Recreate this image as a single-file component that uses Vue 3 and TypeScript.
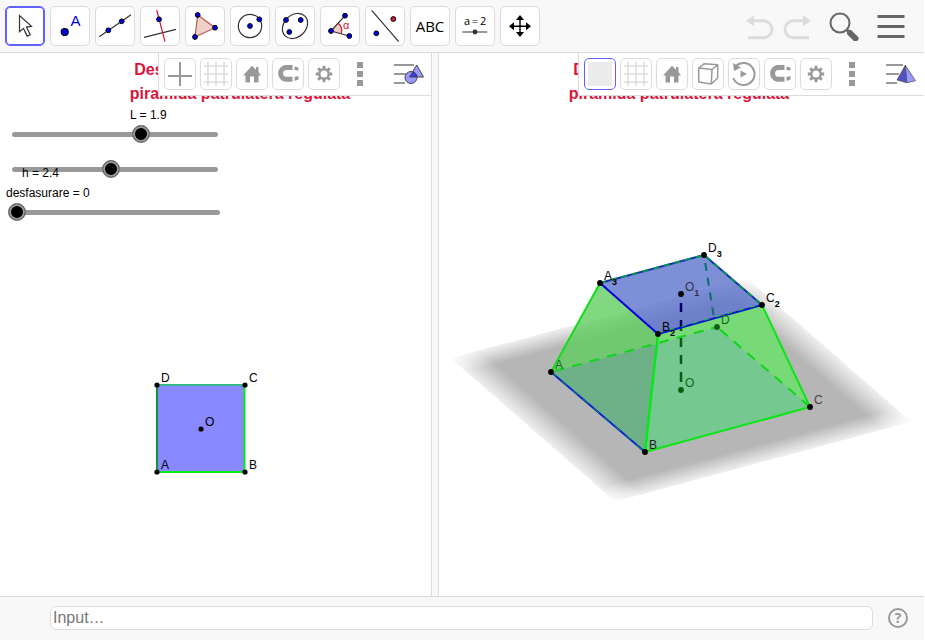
<script setup lang="ts">
import { ref } from 'vue'

interface Slider {
  id: string
  name: string
  value: number
  min: number
  max: number
  step: number
}

interface PointMark {
  x: number
  y: number
  label: string
  sub?: string
  color?: string
  text?: string
}

const command = ref('')
const activeTool = ref('move')

const tools: { id: string; title: string }[] = [
  { id: 'move', title: 'Move' },
  { id: 'point', title: 'Point' },
  { id: 'line', title: 'Line' },
  { id: 'perpendicular', title: 'Perpendicular Line' },
  { id: 'polygon', title: 'Polygon' },
  { id: 'circle', title: 'Circle with Center' },
  { id: 'ellipse', title: 'Ellipse' },
  { id: 'angle', title: 'Angle' },
  { id: 'reflect', title: 'Reflect about Line' },
  { id: 'text', title: 'Text' },
  { id: 'slider', title: 'Slider' },
  { id: 'pan', title: 'Move Graphics View' },
]

const views: { id: string; name: string; controls: string[] }[] = [
  { id: 'plane', name: 'Graphics', controls: ['axes', 'grid', 'home', 'magnet', 'gear'] },
  { id: 'space', name: '3D Graphics', controls: ['slab', 'grid', 'home', 'cube', 'rotate', 'magnet', 'gear'] },
]

const sliders = ref<Slider[]>([
  { id: 'side', name: 'L', value: 1.9, min: 0, max: 3, step: 0.1 },
  { id: 'height', name: 'h', value: 2.4, min: 0, max: 5, step: 0.1 },
  { id: 'unfold', name: 'desfasurare', value: 0, min: 0, max: 1, step: 0.01 },
])

const gearTeeth = [0, 45, 90, 135, 180, 225, 270, 315]

const planePoints: PointMark[] = [
  { x: 157, y: 419, label: 'A' },
  { x: 245, y: 419, label: 'B' },
  { x: 245, y: 332, label: 'C' },
  { x: 157, y: 332, label: 'D' },
  { x: 201, y: 376, label: 'O' },
]

const spacePoints: PointMark[] = [
  { x: 112, y: 319, label: 'A', text: '#1c6b2c' },
  { x: 206, y: 399, label: 'B', text: '#222222' },
  { x: 371, y: 354, label: 'C', text: '#444444' },
  { x: 278, y: 274, label: 'D', color: '#07600f', text: '#14661c' },
  { x: 242, y: 337, label: 'O', color: '#07600f', text: '#14661c' },
  { x: 242, y: 241, label: 'O', sub: '1', text: '#33333f' },
  { x: 161, y: 230, label: 'A', sub: '3' },
  { x: 219, y: 281, label: 'B', sub: '2' },
  { x: 323, y: 252, label: 'C', sub: '2' },
  { x: 265, y: 202, label: 'D', sub: '3' },
]
</script>

<template>
  <div class="app">
    <header class="toolbar">
      <div class="tools">
        <button
          v-for="tool in tools"
          :key="tool.id"
          type="button"
          class="tool"
          :class="{ active: tool.id === activeTool }"
          :aria-label="tool.title"
          @click="activeTool = tool.id"
        >
          <svg class="tool-icon" viewBox="1 1 38 38" fill="none" stroke="#333" stroke-width="1.2">
            <path v-if="tool.id === 'move'" d="M14.5 9.5v16.2l4-3.3 3.7 7.7 3-1.4-3.7-7.6 5-.7z" fill="#fff" />
            <template v-else-if="tool.id === 'point'">
              <circle cx="14.7" cy="26" r="3.5" fill="#0000e6" stroke="#000" />
              <text x="20.5" y="20" class="glyph blue">A</text>
            </template>
            <template v-else-if="tool.id === 'line'">
              <path d="M4.3 30.7 36 8.7" />
              <circle cx="13.3" cy="24.3" r="2.4" class="dot" />
              <circle cx="26.7" cy="15.3" r="2.4" class="dot" />
            </template>
            <template v-else-if="tool.id === 'perpendicular'">
              <path d="M4 31.3 36 23.3" />
              <path d="M16.7 4 25 35.7" stroke="#dc143c" />
              <circle cx="19" cy="13.3" r="2.4" class="dot" />
            </template>
            <template v-else-if="tool.id === 'polygon'">
              <path d="M12.7 9 30 21.7 10 31z" fill="#f0cfc9" stroke="#b85c50" />
              <circle cx="12.7" cy="9" r="2.4" class="dot" />
              <circle cx="30" cy="21.7" r="2.4" class="dot" />
              <circle cx="10" cy="31" r="2.4" class="dot" />
            </template>
            <template v-else-if="tool.id === 'circle'">
              <circle cx="20" cy="20" r="11.7" />
              <circle cx="20" cy="20" r="2.4" class="dot" />
              <circle cx="29.3" cy="13.3" r="2.4" class="dot" />
            </template>
            <template v-else-if="tool.id === 'ellipse'">
              <ellipse cx="20" cy="20" rx="14" ry="11" transform="rotate(-45 20 20)" />
              <circle cx="11" cy="14" r="2.4" class="dot" />
              <circle cx="25.7" cy="14" r="2.4" class="dot" />
              <circle cx="14.3" cy="26" r="2.4" class="dot" />
            </template>
            <template v-else-if="tool.id === 'angle'">
              <path d="M11 25 18.3 17.3A10.6 10.6 0 0 1 21.3 27.7z" fill="#f0cfc9" stroke="none" />
              <path d="M18.3 17.3A10.6 10.6 0 0 1 21.3 27.7" stroke="#dc143c" />
              <path d="M25 9.7 11 25 29.3 30" />
              <circle cx="25" cy="9.7" r="2.4" class="dot" />
              <circle cx="11" cy="25" r="2.4" class="dot" />
              <circle cx="29.3" cy="30" r="2.4" class="dot" />
              <text x="23" y="23" class="glyph alpha red">α</text>
            </template>
            <template v-else-if="tool.id === 'reflect'">
              <path d="M6.7 4.3 33.7 35.7" />
              <circle cx="28.3" cy="13" r="2.4" class="dot crimson" />
              <circle cx="11.3" cy="27.3" r="2.4" class="dot" />
            </template>
            <text v-else-if="tool.id === 'text'" x="20" y="25.5" text-anchor="middle" class="glyph word">ABC</text>
            <template v-else-if="tool.id === 'slider'">
              <text x="9" y="18.5" class="glyph small">a</text>
              <text x="20" y="18.5" text-anchor="middle" class="glyph small">=</text>
              <text x="25" y="18.5" class="glyph small">2</text>
              <path d="M7.3 26H32.3" stroke="#555" />
              <circle cx="20" cy="26" r="2.4" fill="#333" stroke="none" />
            </template>
            <template v-else>
              <path d="M11 20.3h18M20 11v18" stroke="#000" stroke-width="1.4" />
              <path
                d="M20 9l4 5h-8zM20 31l4-5h-8zM9 20.3l5-4v8zM31 20.3l-5-4v8z"
                fill="#000"
                stroke="none"
              />
            </template>
          </svg>
        </button>
      </div>
      <div class="actions">
        <button type="button" class="plain" aria-label="Undo" disabled>
          <svg width="30" height="30" viewBox="1 0 30 30" fill="none" stroke="#dcdcdc" stroke-width="3">
            <path d="M9 9.700h9.500a8.500 8.500 0 0 1 0 17H3" />
            <path d="M1 9.700 9 4.300v10.900z" fill="#dcdcdc" stroke="none" />
          </svg>
        </button>
        <button type="button" class="plain" aria-label="Redo" disabled>
          <svg width="30" height="30" viewBox="1 0 30 30" fill="none" stroke="#dcdcdc" stroke-width="3">
            <path d="M21 9.700h-9.500a8.500 8.500 0 0 0 0 17H27" />
            <path d="M29 9.700 21 4.300v10.900z" fill="#dcdcdc" stroke="none" />
          </svg>
        </button>
        <button type="button" class="plain search" aria-label="Search">
          <svg width="30" height="30" viewBox="0 0 30 30" fill="none" stroke="#666">
            <circle cx="11" cy="12" r="9.500" stroke-width="2" />
            <path d="M17.500 18.500l4 4" stroke-width="3" />
            <path d="M21 22l5.500 5.500" stroke-width="6" stroke-linecap="round" />
          </svg>
        </button>
        <button type="button" class="plain menu" aria-label="Menu">
          <svg width="30" height="30" viewBox="0 0 30 30" stroke="#666" stroke-width="3">
            <path d="M1.500 5.500h27M1.500 15.500h27M1.500 25.500h27" />
          </svg>
        </button>
      </div>
    </header>

    <main class="views">
      <section v-for="view in views" :key="view.id" class="view" :class="view.id" :aria-label="view.name">
        <h2 class="caption">Desfasurarea trunchiului de<br />piramida patrulatera regulata</h2>

        <svg v-if="view.id === 'plane'" class="canvas">
          <rect x="157" y="332" width="87.500" height="87" fill="#8888ff" />
          <g fill="none" stroke-width="2">
            <path d="M157 332H244.500" stroke="#35b98a" />
            <path d="M157 332V419" stroke="#15903f" />
            <path d="M244.500 332V419H157" stroke="#05ec14" />
          </g>
          <g v-for="p in planePoints" :key="p.label">
            <circle :cx="p.x" :cy="p.y" r="2.6" />
            <text :x="p.x + 4" :y="p.y - 3" class="mark">{{ p.label }}</text>
          </g>
        </svg>

        <svg v-else class="canvas">
          <defs>
            <linearGradient id="fadeU">
              <stop offset="0" stop-color="#b6b6b6" stop-opacity="0.2" />
              <stop offset="0.1" stop-color="#b6b6b6" />
              <stop offset="0.9" stop-color="#b6b6b6" />
              <stop offset="1" stop-color="#b6b6b6" stop-opacity="0.2" />
            </linearGradient>
            <linearGradient id="fadeV" x2="0" y2="1">
              <stop offset="0" stop-color="#fff" stop-opacity="0.2" />
              <stop offset="0.1" stop-color="#fff" />
              <stop offset="0.9" stop-color="#fff" />
              <stop offset="1" stop-color="#fff" stop-opacity="0.2" />
            </linearGradient>
            <mask id="fadeMask" maskUnits="userSpaceOnUse" x="0" y="0" width="100" height="100">
              <rect width="100" height="100" fill="url(#fadeV)" />
            </mask>
          </defs>
          <g transform="matrix(2.97 -0.8 1.65 1.44 11 305)">
            <rect width="100" height="100" fill="url(#fadeU)" mask="url(#fadeMask)" />
          </g>
          <path d="M112 319 161 230 219 281 218 291z" fill="#5fcd5c" fill-opacity="0.78" />
          <path d="M219 281 323 252 371 354 278 274 218 291z" fill="#74db73" fill-opacity="0.94" />
          <path d="M112 319 206 399 218 291z" fill="#6eb088" />
          <path d="M206 399 371 354 278 274 218 291z" fill="#74c890" />
          <path d="M161 230 219 281 323 252 265 202z" fill="#5c73cd" fill-opacity="0.8" />
          <g fill="none" stroke-width="2">
            <path d="M112 319 278 274M278 274 371 354" stroke="#10d51c" stroke-dasharray="10 8" stroke-dashoffset="-4" />
            <path d="M265 202 275 265" stroke="#08706c" stroke-dasharray="8 7" stroke-dashoffset="-8" />
            <path d="M242 250v9M242 267v7" stroke="#000068" stroke-width="2.500" />
            <path d="M242 274v4M242 285v9M242 302v9M242 319v10" stroke="#075f16" stroke-width="2.500" />
            <path d="M112 319 161 230" stroke="#12dc1b" />
            <path d="M206 399 371 354M371 354 323 252" stroke="#0de517" />
            <path d="M206 399 219 281" stroke="#08e818" stroke-width="2.500" />
            <path d="M112 319 206 399" stroke="#0826cd" />
            <path d="M112 319 206 399" stroke="#078b5a" stroke-width="1" stroke-dasharray="7 7" />
            <path d="M161 230 219 281" stroke="#0000e0" />
            <path d="M219 281 323 252" stroke="#0818c8" />
            <path d="M219 280 323 251" stroke="#08cf35" stroke-width="1" stroke-dasharray="5 7" />
            <path d="M161 230 265 202 323 252" stroke="#1231ad" />
            <path d="M161 230 265 202 323 252" stroke="#079653" stroke-dasharray="6 5" />
          </g>
          <g v-for="(p, i) in spacePoints" :key="i">
            <circle :cx="p.x" :cy="p.y" r="2.900" :fill="p.color ?? '#000'" />
            <text :x="p.x + 4" :y="p.y - 3" class="mark" :fill="p.text ?? '#000'">{{ p.label }}<tspan v-if="p.sub" dy="5" class="sub">{{ p.sub }}</tspan></text>
          </g>
        </svg>

        <template v-if="view.id === 'plane'">
          <div v-for="s in sliders" :key="s.id" class="slider" :class="s.id">
            <label :for="s.id">{{ s.name }} = {{ s.value }}</label>
            <input :id="s.id" v-model.number="s.value" type="range" :min="s.min" :max="s.max" :step="s.step" />
          </div>
        </template>

        <div class="stylebar">
          <button
            v-for="c in view.controls"
            :key="c"
            type="button"
            class="control"
            :class="{ active: c === 'slab' }"
            :aria-label="c"
          >
            <svg class="control-icon" viewBox="1 1 30 30" fill="none" stroke="#999" stroke-width="2">
              <path v-if="c === 'axes'" d="M16 4v24M4 18h24" />
              <path v-else-if="c === 'grid'" d="M8 4v24M16 4v24M24 4v24M4 8h24M4 16h24M4 24h24" stroke="#dcdcdc" stroke-width="1.500" />
              <rect v-else-if="c === 'slab'" x="4" y="4" width="24" height="24" fill="#ececec" stroke="none" />
              <path
                v-else-if="c === 'home'"
                d="M16 7.800 20 11.700V9h2.500v5L25 17.500h-2.500v7H18v-6h-4v6H9.500v-7H7z"
                fill="#999"
                stroke="none"
              />
              <template v-else-if="c === 'magnet'">
                <path d="M20.500 9.500H13.500a6 6 0 0 0 0 11.800H20.500" stroke-width="5" />
                <path d="M22.500 8.500l4 1v3l-4-.5zM22.500 19l4-1v3.500l-4 1.500z" fill="#999" stroke="none" />
              </template>
              <template v-else-if="c === 'gear'">
                <circle cx="16" cy="16" r="4.700" stroke-width="2.400" />
                <path
                  v-for="a in gearTeeth"
                  :key="a"
                  d="M16 7.800v3.200"
                  stroke-width="3"
                  :transform="`rotate(${a} 16 16)`"
                />
              </template>
              <path
                v-else-if="c === 'cube'"
                d="M6.700 10 20 11.500 19.300 26 6.700 24zM6.700 10 12.300 5.700 25.700 6.700 20 11.500M25.700 6.700V20L19.300 26"
                stroke-width="1.500"
                stroke-linejoin="round"
              />
              <template v-else>
                <path d="M8 8A11 11 0 1 1 5.300 20" />
                <path d="M5 5l1 8 7-3.500z" fill="#999" stroke="none" />
                <path d="M12.500 12.500v7l6.500-3.500z" fill="#999" stroke="none" />
              </template>
            </svg>
          </button>
          <button type="button" class="plain dots" aria-label="More"><i></i><i></i><i></i></button>
          <button type="button" class="plain algebra" aria-label="Style">
            <svg width="32" height="32" viewBox="0 0 32 32">
              <path v-if="view.id === 'plane'" d="M2 7h20M2 16h12M2 25h11" stroke="#999" stroke-width="2" />
              <path v-else d="M2 7h17M2 16h13M2 25h11" stroke="#999" stroke-width="2" />
              <g v-if="view.id === 'plane'" stroke="#444">
                <path d="M24.700 7 31.500 19H17.500z" fill="#9999ff" />
                <circle cx="19" cy="19.500" r="6" fill="#9999ff" />
                <path d="M21 13.800A6 6 0 0 1 25 19H17.500z" fill="#3b3bea" />
              </g>
              <g v-else stroke="#555" stroke-linejoin="round" stroke-width="0.800">
                <path d="M21.300 7.300 31.500 22.700 22.700 24.700z" fill="#9999ff" />
                <path d="M21.300 7.300 22.700 24.700 13 22z" fill="#5151c8" />
              </g>
            </svg>
          </button>
        </div>
      </section>
    </main>

    <footer class="inputbar">
      <input v-model="command" type="text" class="command" placeholder="Input…" aria-label="Input" />
      <button type="button" class="plain help" aria-label="Help">
        <svg width="20" height="20" viewBox="0 0 20 20">
          <circle cx="10" cy="10" r="9" fill="none" stroke="#999" stroke-width="2" />
          <text x="10" y="15" text-anchor="middle" class="question">?</text>
        </svg>
      </button>
    </footer>
  </div>
</template>

<style>
body {
  margin: 0;
  background: #fff;
}
</style>

<style scoped>
.app {
  box-sizing: border-box;
  display: flex;
  flex-direction: column;
  min-height: 100vh;
  padding: 0 1px 1px 0;
  font-family: "Liberation Sans", Arial, sans-serif;
}

button {
  padding: 0;
  font: inherit;
  cursor: pointer;
}

svg {
  display: block;
}

.toolbar {
  display: flex;
  justify-content: space-between;
  align-items: center;
  padding: 6px 18px 6px 5px;
  background: #f8f8f8;
  border-bottom: 1px solid #dcdcdc;
}

.tools {
  display: flex;
  gap: 5px;
}

.tool {
  box-sizing: border-box;
  display: grid;
  place-items: center;
  width: 40px;
  height: 40px;
  background: #fff;
  border: 1px solid #dcdcdc;
  border-radius: 5px;
}

.tool.active {
  border-color: #6161ff;
  box-shadow: inset 0 0 0 1px #6161ff;
}

.tool-icon {
  width: 38px;
  height: 38px;
}

.glyph {
  font: 15px "Liberation Sans", Arial, sans-serif;
  fill: #000;
  stroke: none;
}

.glyph.word {
  font-family: "Open Sans", sans-serif;
}

.glyph.small {
  font-family: "Open Sans", sans-serif;
  font-size: 11px;
}

.glyph.alpha {
  font-size: 11px;
}

.glyph.blue {
  fill: #0000e6;
}

.glyph.red {
  fill: #dc143c;
}

.dot {
  fill: #0000e6;
  stroke: #000;
  stroke-width: 1px;
}

.dot.crimson {
  fill: #dc143c;
}

.plain {
  background: none;
  border: 0;
}

.actions {
  display: flex;
  align-items: center;
  gap: 7px;
}

.search {
  margin-left: 9px;
}

.menu {
  margin-left: 10px;
}

.views {
  display: flex;
  flex: 1;
  background: #f8f8f8;
}

.view {
  position: relative;
  flex: 431 1 0;
  min-width: 0;
  overflow: hidden;
  background: #fff;
}

.view.plane {
  border-right: 1px solid #dcdcdc;
}

.view.space {
  flex-grow: 485;
  margin-left: 6px;
  border-left: 1px solid #dcdcdc;
}

.canvas {
  position: absolute;
  inset: 0;
  width: 100%;
  height: 100%;
}

.caption {
  position: absolute;
  top: 5px;
  left: 120px;
  width: 240px;
  margin: 0;
  font-size: 16px;
  line-height: 24px;
  text-align: center;
  color: #dc143c;
}

.mark {
  font-size: 12px;
}

.sub {
  font-size: 9px;
  font-weight: bold;
}

.slider {
  position: absolute;
  left: 8px;
  width: 214px;
}

.slider.side {
  top: 72px;
}

.slider.height {
  top: 107px;
}

.slider.unfold {
  top: 150px;
  width: 216px;
}

.slider label {
  position: absolute;
  font-size: 12px;
  line-height: 14px;
  white-space: nowrap;
}

.slider.side label {
  left: 122px;
  top: -17px;
}

.slider.height label {
  left: 14px;
  top: 6px;
}

.slider.unfold label {
  left: -2px;
  top: -17px;
}

.slider::before {
  content: "";
  position: absolute;
  top: 7px;
  left: 4px;
  right: 4px;
  height: 5px;
  border-radius: 3px;
  background: #999;
}

.slider input {
  position: relative;
  display: block;
  width: 100%;
  height: 18px;
  margin: 0;
  background: none;
  appearance: none;
}

.slider input::-webkit-slider-thumb {
  box-sizing: border-box;
  width: 18px;
  height: 18px;
  appearance: none;
  border: 1px solid #777;
  border-radius: 50%;
  background: #000;
  box-shadow: inset 0 0 0 2px #999;
}

.stylebar {
  position: absolute;
  top: 0;
  right: 0;
  display: flex;
  gap: 4px;
  padding: 5px 7px 5px 5px;
  background: #fff;
  border-left: 1px solid #dcdcdc;
  border-bottom: 1px solid #dcdcdc;
}

.space .stylebar {
  padding-right: 8px;
}

.control {
  box-sizing: border-box;
  display: grid;
  place-items: center;
  width: 32px;
  height: 32px;
  background: #fff;
  border: 1px solid #dcdcdc;
  border-radius: 5px;
}

.control.active {
  border-color: #6161ff;
}

.control-icon {
  width: 30px;
  height: 30px;
}

.dots {
  display: flex;
  flex-direction: column;
  align-items: center;
  justify-content: center;
  gap: 3px;
  width: 32px;
}

.dots i {
  width: 6px;
  height: 6px;
  background: #999;
}

.algebra {
  margin-left: 12px;
}

.inputbar {
  display: flex;
  align-items: center;
  gap: 15px;
  padding: 9px 16px 10px 50px;
  background: #f8f8f8;
  border-top: 1px solid #dcdcdc;
}

.command {
  box-sizing: border-box;
  flex: 1;
  min-width: 0;
  height: 24px;
  padding: 0 2px;
  font: 16px "Liberation Sans", Arial, sans-serif;
  color: #333;
  background: #fff;
  border: 1px solid #dcdcdc;
  border-radius: 6px;
}

.command::placeholder {
  color: #777;
  opacity: 1;
}

.question {
  font: bold 14px "Open Sans", sans-serif;
  fill: #999;
}
</style>
